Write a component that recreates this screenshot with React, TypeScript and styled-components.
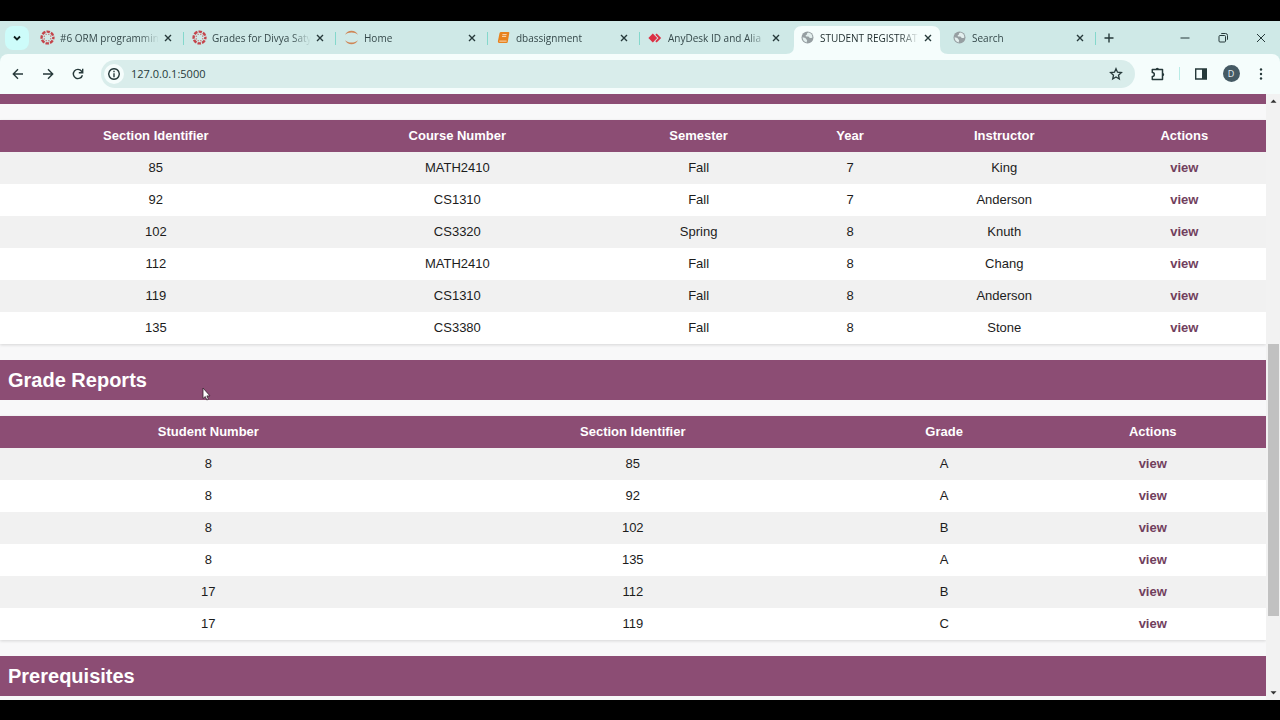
import React from "react";
import styled, { createGlobalStyle, css } from "styled-components";

const GlobalStyle = createGlobalStyle`
  *, *::before, *::after { box-sizing: border-box; }
  body { margin: 0; background: #000; }
  button, input { font: inherit; color: inherit; }
`;

const plum = "#8c4d74";

const Frame = styled.div`
  display: flex;
  flex-direction: column;
  height: 100vh;
  padding: 21px 0 20px;
  background: #000;
  font-family: "Open Sans", "Noto Sans", sans-serif;
  overflow: hidden;
`;

const IconButton = styled.button<{ $size?: number }>`
  display: flex;
  align-items: center;
  justify-content: center;
  flex: none;
  width: ${(p) => p.$size ?? 24}px;
  height: ${(p) => p.$size ?? 24}px;
  padding: 0;
  border: 0;
  background: none;
  color: #26393a;
`;

/* ---------- tab strip ---------- */

const TabStrip = styled.header`
  display: flex;
  align-items: center;
  flex: none;
  height: 33px;
  padding-left: 5px;
  background: #cfe9e7;
`;

const TabSearch = styled(IconButton)`
  border-radius: 8px;
  background: #cdfcfa;
  color: #10201f;
`;

const Tabs = styled.div`
  display: flex;
  flex: 0 1 1064px;
  min-width: 0;
  height: 33px;
  margin-left: 2px;
`;

const TabSlot = styled.div<{ $active: boolean; $divider: boolean }>`
  position: relative;
  display: flex;
  align-items: center;
  flex: 1 1 0;
  min-width: 0;
  padding: 0 8px;
  color: ${(p) => (p.$active ? "#1d2b2c" : "#35484a")};

  ${(p) =>
    p.$divider &&
    css`
      &::after {
        content: "";
        position: absolute;
        top: 11px;
        right: -1px;
        width: 1px;
        height: 13px;
        background: #84d8cc;
      }
    `}
`;

const ActiveShape = styled.svg`
  position: absolute;
  left: -5px;
  bottom: 0;
  width: calc(100% + 10px);
  height: 28px;
`;

const Favicon = styled.span`
  position: relative;
  display: flex;
  align-items: center;
  justify-content: center;
  flex: none;
  width: 16px;
  height: 16px;
`;

const TabTitle = styled.button`
  position: relative;
  flex: 1;
  min-width: 0;
  margin-left: 5px;
  padding: 0;
  border: 0;
  background: none;
  font-size: 10px;
  line-height: 16px;
  text-align: left;
  white-space: nowrap;
  overflow: hidden;
  mask-image: linear-gradient(to right, #000 80%, transparent 100%);
`;

const TabClose = styled(IconButton)`
  position: relative;
  margin-left: 2px;
`;

const WindowControls = styled.div`
  display: flex;
  gap: 14px;
  margin-left: auto;
  padding-right: 7px;
`;

/* ---------- toolbar ---------- */

const Toolbar = styled.div`
  display: flex;
  align-items: center;
  flex: none;
  height: 40px;
  padding: 0 7px 1px 6px;
  border-radius: 8px 8px 0 0;
  background: #f5fdfc;
`;

const ToolbarBack = styled.div`
  flex: none;
  background: #cfe9e7;
`;

const NavButtons = styled.nav`
  display: flex;
  gap: 6px;
`;

const AddressBar = styled.label`
  display: flex;
  align-items: center;
  flex: 1;
  min-width: 0;
  height: 28px;
  margin-left: 11px;
  padding: 0 7px 0 3px;
  border-radius: 14px;
  background: #d9edeb;
`;

const SiteInfo = styled(IconButton)`
  border-radius: 50%;
  background: #f5fdfc;
`;

const Address = styled.input`
  flex: 1;
  min-width: 0;
  margin-left: 7px;
  padding: 0;
  border: 0;
  outline: 0;
  background: none;
  color: #26393a;
  font-size: 11px;
  line-height: 20px;
`;

const ToolbarActions = styled.div`
  display: flex;
  align-items: center;
  gap: 6px;
  margin-left: 11px;
`;

const ToolbarDivider = styled.span`
  width: 1px;
  height: 13px;
  margin: 0 3px;
  background: #b9ece6;
`;

const Avatar = styled.span`
  display: flex;
  align-items: center;
  justify-content: center;
  width: 17px;
  height: 17px;
  border-radius: 50%;
  background: #455a64;
  color: #e4eef0;
  font-size: 9px;
  line-height: 9px;
`;

/* ---------- page ---------- */

const Viewport = styled.div`
  display: flex;
  flex: 1;
  min-height: 0;
  background: #f8f8f9;
`;

const Page = styled.main`
  position: relative;
  flex: 1;
  min-width: 0;
  overflow: hidden;
  font-family: "Liberation Sans", Arial, sans-serif;
  color: #1c1c1c;
`;

const Band = styled.div`
  height: 10px;
  background: ${plum};
`;

const SectionTitle = styled.h2`
  margin: 0;
  padding: 5px 8px;
  background: ${plum};
  color: #fff;
  font-size: 20px;
  line-height: 30px;
`;

const DataTable = styled.table`
  width: 100%;
  margin: 16px 0;
  border-collapse: collapse;
  background: #fff;
  box-shadow: 0 1px 3px rgba(0, 0, 0, 0.14);
  font-size: 13px;
  line-height: 16px;
  text-align: center;

  tbody tr:nth-child(odd) {
    background: #f1f1f1;
  }
`;

const HeadCell = styled.th`
  padding: 8px;
  background: ${plum};
  color: #fff;
`;

const Cell = styled.td`
  padding: 8px;
`;

const ViewLink = styled.a`
  color: #71405d;
  font-weight: bold;
  text-decoration: none;
`;

const Scrollbar = styled.div`
  display: flex;
  flex-direction: column;
  flex: none;
  width: 14px;
  padding: 0 1px 0 2px;
  background: #f2f2f2;
`;

const ScrollArrow = styled(IconButton)`
  width: 11px;
  height: 14px;
`;

const ScrollSpace = styled.span<{ $share: number }>`
  flex: ${(p) => p.$share} 1 0;
`;

const ScrollThumb = styled.span`
  flex: 272 1 0;
  background: #c1c1c1;
`;

const Pointer = styled.svg`
  position: absolute;
  left: 202px;
  top: 293px;
  width: 9px;
  height: 14px;
`;

/* ---------- icons ---------- */

type StrokeProps = { d: string; size?: number; w?: number };
const Stroke = ({ d, size = 14, w = 1.5 }: StrokeProps) => (
  <svg width={size} height={size} viewBox="0 0 14 14" fill="none" stroke="currentColor" strokeWidth={w}>
    <path d={d} />
  </svg>
);

const CanvasIcon = () => (
  <svg width="15" height="15" viewBox="0 0 15 15">
    <circle cx="7.5" cy="7.5" r="5.9" fill="none" stroke="#c4444b" strokeWidth="2.4" strokeDasharray="3.5 1.13" strokeDashoffset="1.7" />
    {[0, 45, 90, 135, 180, 225, 270, 315].map((a) => (
      <circle key={a} cx="7.5" cy="4" r="0.6" fill="#c4444b" transform={`rotate(${a + 22} 7.5 7.5)`} />
    ))}
  </svg>
);

const JupyterIcon = () => (
  <svg width="15" height="15" viewBox="0 0 15 15" fill="#cf8656">
    <path d="M1 4.800C2.400 1.900 4.700.8 7.500.8s5.100 1.100 6.500 4C12.200 3.200 10 2.500 7.500 2.500S2.800 3.200 1 4.800z" />
    <path d="M1 10.200C2.400 13.100 4.700 14.200 7.500 14.200s5.100-1.100 6.500-4c-1.800 1.600-4 2.300-6.500 2.300S2.800 11.800 1 10.200z" />
  </svg>
);

const NotebookIcon = () => (
  <svg width="13" height="13" viewBox="0 0 13 13">
    <path d="M4 1h7.500q1 0 .8 1L10.800 10.800q-.2 1.200-1.200 1.200H2.200Q.6 12 .9 10.300L2.500 2.300Q2.800 1 4 1z" fill="#e8821e" />
    <path d="M5.400 3.600h4.200M5 5.400h4.200M2.300 10.100h7.300" stroke="#fbe3c4" strokeWidth="0.900" />
  </svg>
);

const AnyDeskIcon = () => (
  <svg width="14" height="14" viewBox="0 0 14 14">
    <path d="M4.800 2.600 9.200 7 4.800 11.400.4 7z" fill="#dc2f43" />
    <path d="M8 3.200 11.800 7 8 10.800" fill="none" stroke="#dc2f43" strokeWidth="1.900" />
  </svg>
);

const GlobeIcon = () => (
  <svg width="13" height="13" viewBox="0 0 13 13">
    <circle cx="6.500" cy="6.500" r="6" fill="#969fa2" />
    <path d="M7.800 1.500c-1 .3-2 .7-1.900 1.700.1.900-1.200.7-1.300 1.600-.1 1 1.500.6 2.600.8 1 .2.800 1.300 1.900 1.400 1 .1 1.700-.3 2.300-.6.100-2.300-1.400-4.400-3.600-4.900zM1.600 6.200c1.200.2 3 .5 3.300 1.500.2.900 1.300.7 1.200 1.700-.1.800-.5 1.400-.4 2-2.400-.4-4.200-2.600-4.100-5.200z" fill="#e3efee" />
  </svg>
);

const CloseGlyph = () => <Stroke d="M4 4l6 6M10 4l-6 6" w={1.4} />;

const tabs = [
  { title: "#6 ORM programmin", icon: <CanvasIcon /> },
  { title: "Grades for Divya Saty", icon: <CanvasIcon /> },
  { title: "Home", icon: <JupyterIcon /> },
  { title: "dbassignment", icon: <NotebookIcon /> },
  { title: "AnyDesk ID and Alia", icon: <AnyDeskIcon /> },
  { title: "STUDENT REGISTRAT", icon: <GlobeIcon />, active: true },
  { title: "Search", icon: <GlobeIcon /> },
];

const sections = {
  head: ["Section Identifier", "Course Number", "Semester", "Year", "Instructor"],
  rows: [
    ["85", "MATH2410", "Fall", "7", "King"],
    ["92", "CS1310", "Fall", "7", "Anderson"],
    ["102", "CS3320", "Spring", "8", "Knuth"],
    ["112", "MATH2410", "Fall", "8", "Chang"],
    ["119", "CS1310", "Fall", "8", "Anderson"],
    ["135", "CS3380", "Fall", "8", "Stone"],
  ],
};

const grades = {
  head: ["Student Number", "Section Identifier", "Grade"],
  rows: [
    ["8", "85", "A"],
    ["8", "92", "A"],
    ["8", "102", "B"],
    ["8", "135", "A"],
    ["17", "112", "B"],
    ["17", "119", "C"],
  ],
};

const RecordTable = ({ head, rows }: { head: string[]; rows: string[][] }) => (
  <DataTable>
    <thead>
      <tr>
        {[...head, "Actions"].map((h) => (
          <HeadCell key={h} scope="col">{h}</HeadCell>
        ))}
      </tr>
    </thead>
    <tbody>
      {rows.map((row, r) => (
        <tr key={r}>
          {row.map((value, c) => (
            <Cell key={c}>{value}</Cell>
          ))}
          <Cell><ViewLink href="#">view</ViewLink></Cell>
        </tr>
      ))}
    </tbody>
  </DataTable>
);

export default function App() {
  return (
    <Frame>
      <GlobalStyle />
      <TabStrip>
        <TabSearch aria-label="Search tabs"><Stroke d="M4 5.500l3 3 3-3" w={1.8} /></TabSearch>
        <Tabs>
          {tabs.map((tab, i) => (
            <TabSlot key={tab.title} $active={!!tab.active} $divider={!tab.active && !tabs[i + 1]?.active}>
              {tab.active && (
                <ActiveShape viewBox="0 0 162 28" preserveAspectRatio="none" aria-hidden="true">
                  <path d="M0 28Q8 28 8 20V8Q8 0 16 0H146Q154 0 154 8V20Q154 28 162 28z" fill="#f5fdfc" />
                </ActiveShape>
              )}
              <Favicon>{tab.icon}</Favicon>
              <TabTitle>{tab.title}</TabTitle>
              <TabClose $size={14} aria-label="Close tab"><CloseGlyph /></TabClose>
            </TabSlot>
          ))}
        </Tabs>
        <IconButton $size={28} aria-label="New tab"><Stroke d="M7 2.500v9M2.500 7h9" w={1.400} /></IconButton>
        <WindowControls>
          <IconButton aria-label="Minimize"><Stroke d="M2.500 7h9" w={1} /></IconButton>
          <IconButton aria-label="Restore">
            <Stroke d="M4 4.500h4.500q1 0 1 1V10q0 1-1 1H4q-1 0-1-1V5.500q0-1 1-1zM5 3q.2-.5 1-.5h3.500q2 0 2 2V8q0 .8-.6 1" w={1} />
          </IconButton>
          <IconButton aria-label="Close window"><Stroke d="M3 3l8 8M11 3l-8 8" w={1} /></IconButton>
        </WindowControls>
      </TabStrip>

      <ToolbarBack>
        <Toolbar>
          <NavButtons>
            <IconButton aria-label="Back"><Stroke d="M12 7H2.500M7 2.300L2.300 7 7 11.700" w={1.400} /></IconButton>
            <IconButton aria-label="Forward"><Stroke d="M2 7h9.500M7 2.300L11.700 7 7 11.700" w={1.400} /></IconButton>
            <IconButton aria-label="Reload"><Stroke d="M11.400 8.200A4.600 4.600 0 1 1 10.600 4.200L11.700 5.400M11.700 1.800v3.900H7.800" w={1.400} /></IconButton>
          </NavButtons>
          <AddressBar>
            <SiteInfo $size={20} aria-label="Site information">
              <Stroke d="M7 1.700a5.300 5.300 0 1 0 .01 0zM7 6.200v4M7 3.800v1.400" w={1.400} />
            </SiteInfo>
            <Address aria-label="Address" defaultValue="127.0.0.1:5000" />
            <IconButton aria-label="Bookmark">
              <Stroke d="M7 1.700l1.500 3.500 3.900.4-2.900 2.600.8 3.800L7 10l-3.300 2 .8-3.800L1.600 5.600l3.900-.4z" w={1.300} />
            </IconButton>
          </AddressBar>
          <ToolbarActions>
            <IconButton aria-label="Extensions">
              <svg width="16" height="16" viewBox="0 0 16 16" fill="none" stroke="#26393a" strokeWidth="1.500">
                <path d="M2.300 3.500H12.500V13.500H2.300V10.600q2 0 2-2t-2-2z" strokeLinejoin="round" />
                <path d="M5.700 3.300a1.600 1.600 0 0 1 3.200 0zM12.700 7a1.500 1.500 0 0 1 0 3z" fill="#26393a" stroke="none" />
              </svg>
            </IconButton>
            <ToolbarDivider />
            <IconButton aria-label="Side panel">
              <svg width="14" height="14" viewBox="0 0 14 14">
                <path d="M1.700 2h10.600v10H1.700z" fill="none" stroke="#26393a" strokeWidth="1.400" />
                <path d="M8 2h4.300v10H8z" fill="#26393a" />
              </svg>
            </IconButton>
            <IconButton aria-label="Profile"><Avatar>D</Avatar></IconButton>
            <IconButton aria-label="Menu">
              <svg width="14" height="14" viewBox="0 0 14 14" fill="#26393a">
                <circle cx="7" cy="2.500" r="1.200" />
                <circle cx="7" cy="7" r="1.200" />
                <circle cx="7" cy="11.500" r="1.200" />
              </svg>
            </IconButton>
          </ToolbarActions>
        </Toolbar>
      </ToolbarBack>

      <Viewport>
        <Page>
          <Band />
          <RecordTable {...sections} />
          <SectionTitle>Grade Reports</SectionTitle>
          <RecordTable {...grades} />
          <SectionTitle>Prerequisites</SectionTitle>
          <Pointer viewBox="0 0 9 14" aria-hidden="true">
            <path d="M1 1v10.500l2.300-2 1.500 3.500 1.600-.7-1.500-3.400H8z" fill="#fff" stroke="#33202c" strokeWidth="0.800" />
          </Pointer>
        </Page>
        <Scrollbar>
          <ScrollArrow aria-label="Scroll up">
            <svg width="7" height="4" viewBox="0 0 7 4"><path d="M0.500 3.800L3.500.5l3 3.300z" fill="#333" /></svg>
          </ScrollArrow>
          <ScrollSpace $share={236} />
          <ScrollThumb />
          <ScrollSpace $share={70} />
          <ScrollArrow aria-label="Scroll down">
            <svg width="7" height="4" viewBox="0 0 7 4"><path d="M0.500.2L3.500 3.500l3-3.300z" fill="#333" /></svg>
          </ScrollArrow>
        </Scrollbar>
      </Viewport>
    </Frame>
  );
}
